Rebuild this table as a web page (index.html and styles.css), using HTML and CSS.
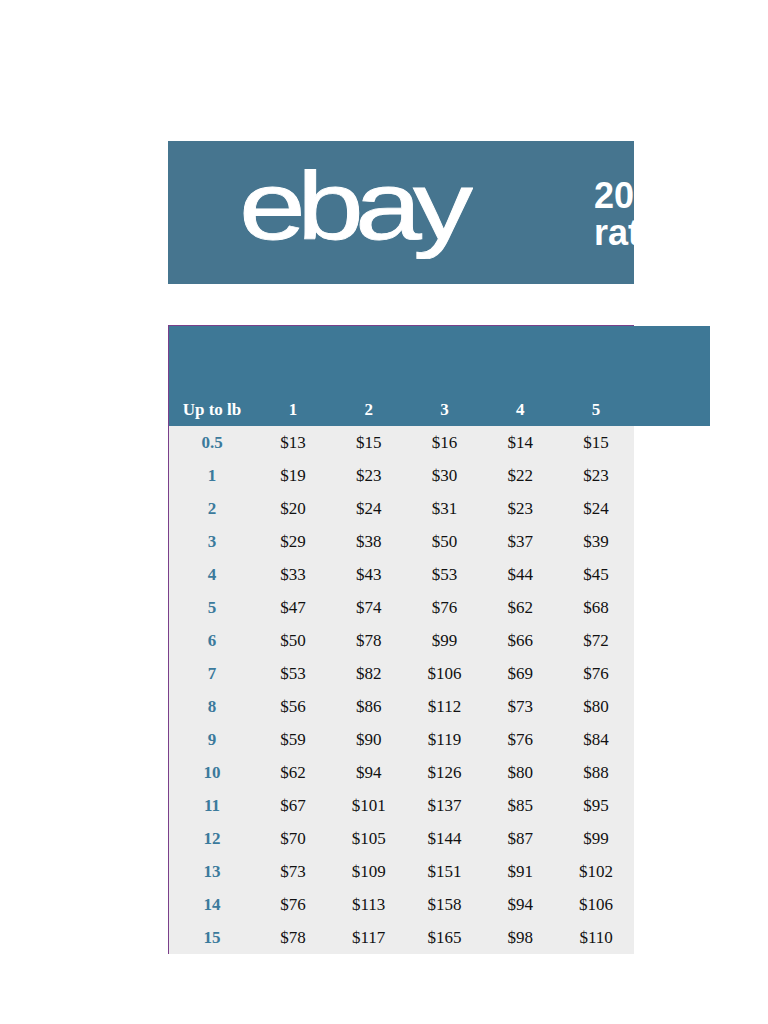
FILE: index.html
```html
<!DOCTYPE html>
<html>
<head>
<meta charset="utf-8">
<link rel="stylesheet" href="styles.css">
</head>
<body>
<div class="page">
  <div class="banner">
    <svg class="logo" width="230" height="90" viewBox="0 0 230 90">
      <g transform="translate(-4 0) scale(1.25 1)">
        <text x="0" y="70" class="logo-text">ebay</text>
      </g>
    </svg>
    <div class="title">
      <div>2024 eBay shipping</div>
      <div>rates</div>
    </div>
  </div>

  <div class="table">
    <div class="thead">
      <div class="row head-row">
        <div class="cell">Up to lb</div>
        <div class="cell">1</div>
        <div class="cell">2</div>
        <div class="cell">3</div>
        <div class="cell">4</div>
        <div class="cell">5</div>
        <div class="cell"></div>
      </div>
    </div>
    <div class="tbody">
      <div class="row"><div class="cell lbl">0.5</div><div class="cell">$13</div><div class="cell">$15</div><div class="cell">$16</div><div class="cell">$14</div><div class="cell">$15</div></div>
      <div class="row"><div class="cell lbl">1</div><div class="cell">$19</div><div class="cell">$23</div><div class="cell">$30</div><div class="cell">$22</div><div class="cell">$23</div></div>
      <div class="row"><div class="cell lbl">2</div><div class="cell">$20</div><div class="cell">$24</div><div class="cell">$31</div><div class="cell">$23</div><div class="cell">$24</div></div>
      <div class="row"><div class="cell lbl">3</div><div class="cell">$29</div><div class="cell">$38</div><div class="cell">$50</div><div class="cell">$37</div><div class="cell">$39</div></div>
      <div class="row"><div class="cell lbl">4</div><div class="cell">$33</div><div class="cell">$43</div><div class="cell">$53</div><div class="cell">$44</div><div class="cell">$45</div></div>
      <div class="row"><div class="cell lbl">5</div><div class="cell">$47</div><div class="cell">$74</div><div class="cell">$76</div><div class="cell">$62</div><div class="cell">$68</div></div>
      <div class="row"><div class="cell lbl">6</div><div class="cell">$50</div><div class="cell">$78</div><div class="cell">$99</div><div class="cell">$66</div><div class="cell">$72</div></div>
      <div class="row"><div class="cell lbl">7</div><div class="cell">$53</div><div class="cell">$82</div><div class="cell">$106</div><div class="cell">$69</div><div class="cell">$76</div></div>
      <div class="row"><div class="cell lbl">8</div><div class="cell">$56</div><div class="cell">$86</div><div class="cell">$112</div><div class="cell">$73</div><div class="cell">$80</div></div>
      <div class="row"><div class="cell lbl">9</div><div class="cell">$59</div><div class="cell">$90</div><div class="cell">$119</div><div class="cell">$76</div><div class="cell">$84</div></div>
      <div class="row"><div class="cell lbl">10</div><div class="cell">$62</div><div class="cell">$94</div><div class="cell">$126</div><div class="cell">$80</div><div class="cell">$88</div></div>
      <div class="row"><div class="cell lbl">11</div><div class="cell">$67</div><div class="cell">$101</div><div class="cell">$137</div><div class="cell">$85</div><div class="cell">$95</div></div>
      <div class="row"><div class="cell lbl">12</div><div class="cell">$70</div><div class="cell">$105</div><div class="cell">$144</div><div class="cell">$87</div><div class="cell">$99</div></div>
      <div class="row"><div class="cell lbl">13</div><div class="cell">$73</div><div class="cell">$109</div><div class="cell">$151</div><div class="cell">$91</div><div class="cell">$102</div></div>
      <div class="row"><div class="cell lbl">14</div><div class="cell">$76</div><div class="cell">$113</div><div class="cell">$158</div><div class="cell">$94</div><div class="cell">$106</div></div>
      <div class="row"><div class="cell lbl">15</div><div class="cell">$78</div><div class="cell">$117</div><div class="cell">$165</div><div class="cell">$98</div><div class="cell">$110</div></div>
    </div>
  </div>
</div>
</body>
</html>
```

FILE: styles.css
```css
html, body {
  margin: 0;
  padding: 0;
  background: #ffffff;
}

.page {
  padding-top: 141px;
  padding-left: 168px;
}

.banner {
  width: 466px;
  height: 143px;
  background: #46758f;
  display: flex;
  align-items: center;
  padding-left: 75px;
  box-sizing: border-box;
  overflow: hidden;
  gap: 121px;
}

.logo {
  flex: none;
  display: block;
  margin-top: 2px;
  overflow: hidden;
}

.logo-text {
  font-family: "Liberation Sans", Arial, sans-serif;
  font-size: 96px;
  letter-spacing: -7px;
  fill: #ffffff;
  stroke: #ffffff;
  stroke-width: 0.8px;
}

.title {
  flex: none;
  font-family: "Liberation Sans", Arial, sans-serif;
  font-weight: bold;
  font-size: 36px;
  line-height: 37px;
  color: #ffffff;
  white-space: nowrap;
  margin-top: 2px;
}

.table {
  margin-top: 41px;
  width: 466px;
  box-sizing: border-box;
  border-left: 1px solid #7a3f8a;
  border-top: 1px solid #7a3f8a;
  font-family: "Liberation Serif", "Times New Roman", serif;
  font-size: 17px;
}

.thead {
  width: 541px;
  height: 100px;
  background: #3e7896;
  display: flex;
  flex-direction: column;
  justify-content: flex-end;
}

.row {
  display: grid;
  grid-template-columns: 86px repeat(5, 75.8px);
  height: 33px;
  align-items: center;
}

.head-row {
  grid-template-columns: 86px repeat(5, 75.8px) 1fr;
  color: #ffffff;
  font-weight: bold;
}

.tbody {
  width: 465px;
  background: #ededed;
  color: #111111;
}

.cell {
  text-align: center;
  white-space: nowrap;
}

.lbl {
  color: #3b7a9c;
  font-weight: bold;
}
```
